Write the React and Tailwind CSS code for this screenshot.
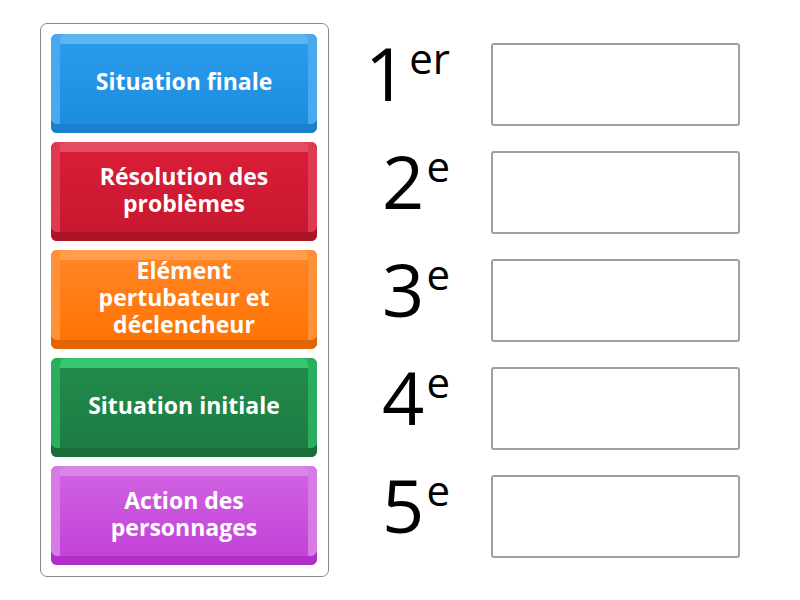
import React from "react";

const cards = [
  {
    text: "Situation finale",
    cls: "bg-[linear-gradient(#2c9ded,#1b8cdd)] shadow-[inset_0_-9px_0_#1a7fcc,inset_9px_0_0_#4aa9ee,inset_-9px_0_0_#4aa9ee,inset_0_10px_0_#5db6f2]",
  },
  {
    text: "Résolution des problèmes",
    cls: "bg-[linear-gradient(#dc1d38,#c5182e)] shadow-[inset_0_-9px_0_#ad1428,inset_9px_0_0_#de3a50,inset_-9px_0_0_#de3a50,inset_0_10px_0_#e34d5f]",
  },
  {
    text: "Elément pertubateur et déclencheur",
    cls: "bg-[linear-gradient(#ff8628,#ff7200)] shadow-[inset_0_-9px_0_#e26400,inset_9px_0_0_#ff9238,inset_-9px_0_0_#ff9238,inset_0_10px_0_#ff9d4c]",
  },
  {
    text: "Situation initiale",
    cls: "bg-[linear-gradient(#228d4c,#1c7a41)] shadow-[inset_0_-9px_0_#1a6c39,inset_9px_0_0_#2aad5c,inset_-9px_0_0_#2aad5c,inset_0_10px_0_#35c76d]",
  },
  {
    text: "Action des personnages",
    cls: "bg-[linear-gradient(#d064e1,#c23fd8)] shadow-[inset_0_-9px_0_#b22ec9,inset_9px_0_0_#d67ae6,inset_-9px_0_0_#d67ae6,inset_0_10px_0_#da86e9]",
  },
];

const slots = [
  { n: "1", sup: "er" },
  { n: "2", sup: "e" },
  { n: "3", sup: "e" },
  { n: "4", sup: "e" },
  { n: "5", sup: "e" },
];

function Card({ text, cls }) {
  return (
    <div
      className={`h-[99px] rounded-[6px] flex items-center justify-center px-[22px] pb-[4px] ${cls}`}
    >
      <span className="text-white text-center font-bold text-[23px] leading-[27px]">
        {text}
      </span>
    </div>
  );
}

function Slot({ n, sup }) {
  return (
    <div className="h-[99px] flex">
      <div className="w-[100px] mt-[2px] text-right text-black text-[74px] leading-none whitespace-nowrap">
        {n}
        <span className="relative -top-[27px] text-[42px] ml-[2px]">{sup}</span>
      </div>
      <div className="ml-[41px] mt-[9px] w-[249px] h-[83px] border-2 border-[#a0a0a0] rounded-[3px] bg-white" />
    </div>
  );
}

export default function App() {
  return (
    <div
      className="w-[800px] h-[600px] bg-white flex pt-[23px] pl-[40px]"
      style={{ fontFamily: '"Open Sans", "Noto Sans", sans-serif' }}
    >
      {/* draggable cards */}
      <div className="w-[289px] h-[554px] border-[1.5px] border-[#8a8a8a] rounded-[7px] pt-[10px] pl-[10px] pr-[11px] flex flex-col gap-[9px]">
        {cards.map((c) => (
          <Card key={c.text} text={c.text} cls={c.cls} />
        ))}
      </div>

      {/* target slots */}
      <div className="ml-[21px] pt-[11px] flex flex-col gap-[9px]">
        {slots.map((s) => (
          <Slot key={s.n} n={s.n} sup={s.sup} />
        ))}
      </div>
    </div>
  );
}
